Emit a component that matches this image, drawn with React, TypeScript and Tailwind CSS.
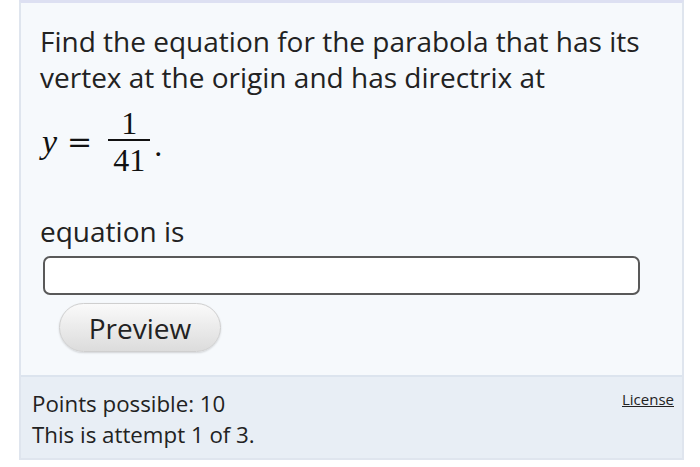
export default function App() {
  return (
    <div className="h-[467px] w-[700px] overflow-hidden bg-white font-['Open_Sans',sans-serif] text-[#222]">
      <div className="ml-[19px] w-[665px] border-x-2 border-t-[3px] border-b-2 border-x-[#dfe5ee] border-t-[#dde0f2] border-b-[#dfe5ee] bg-[#f6f9fc]">
        <div className="px-[19px] pb-[23px] pt-[20px]">
          <p className="text-[28px] leading-[36px]">
            Find the equation for the parabola that has its vertex at the origin and has directrix at
          </p>
          <div className="flex h-[94px] items-center pl-[2px] font-['Liberation_Serif',serif] text-[32px] text-[#111]">
            <span className="text-[34px] italic leading-none">y</span>
            <span className="ml-[10px] font-['DejaVu_Serif',serif] text-[30px] leading-none">=</span>
            <span className="ml-[16px] inline-flex flex-col items-center">
              <span className="leading-[31px]">1</span>
              <span className="h-[2px] w-[42px] bg-[#111]" />
              <span className="mt-[2px] leading-[34px]">41</span>
            </span>
            <span className="ml-[4px] mt-[6px] leading-none">.</span>
          </div>
          <p className="mt-[24px] text-[28px] leading-[36px]">equation is</p>
          <input
            type="text"
            className="ml-[3px] mt-[7px] block h-[39px] w-[597px] rounded-[7px] border-2 border-[#595959] bg-white"
          />
          <button className="ml-[19px] mt-[8px] h-[49px] w-[162px] rounded-full border border-[#cfcfcf] bg-gradient-to-b from-[#fafafa] to-[#dcdcdc] text-[28px] text-[#222] shadow-[0_1px_2px_rgba(0,0,0,0.15)]">
            Preview
          </button>
        </div>
        <div className="flex justify-between border-t-2 border-[#dce4ee] bg-[#e8eef5] pb-[8px] pl-[11px] pr-[8px] pt-[11px]">
          <div className="text-[22.3px] leading-[31px]">
            <div>Points possible: 10</div>
            <div>This is attempt 1 of 3.</div>
          </div>
          <a href="#" className="mt-[1px] text-[15px] leading-[20px] text-[#222] underline">
            License
          </a>
        </div>
      </div>
    </div>
  );
}
